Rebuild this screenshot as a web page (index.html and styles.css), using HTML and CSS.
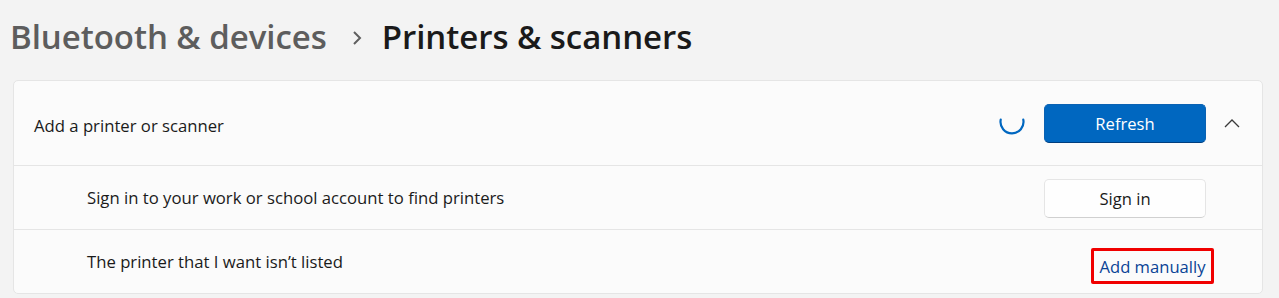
FILE: index.html
```html
<!DOCTYPE html>
<html lang="en">
<head>
<meta charset="utf-8">
<title>Printers &amp; scanners</title>
<link rel="stylesheet" href="styles.css">
</head>
<body>
<header class="breadcrumb">
  <span class="crumb-parent">Bluetooth &amp; devices</span>
  <svg class="crumb-sep" width="10" height="16" viewBox="0 0 10 16"><path d="M2 2 L8 8 L2 14" fill="none" stroke="#5f5f5f" stroke-width="2"/></svg>
  <span class="crumb-current">Printers &amp; scanners</span>
</header>
<section class="card">
  <div class="row row-head">
    <span class="label label-head">Add a printer or scanner</span>
    <div class="actions">
      <svg class="spinner" width="26" height="26" viewBox="0 0 26 26"><path d="M1.7 10.7 A11.5 11.5 0 1 0 24.3 10.7" fill="none" stroke="#0067c0" stroke-width="2.2" stroke-linecap="round"/></svg>
      <button class="btn btn-primary">Refresh</button>
      <span class="expander"><svg width="16" height="9" viewBox="0 0 16 9"><path d="M1 8 L8 1 L15 8" fill="none" stroke="#3a3a3a" stroke-width="1.3"/></svg></span>
    </div>
  </div>
  <div class="row row-sub">
    <span class="label">Sign in to your work or school account to find printers</span>
    <button class="btn btn-secondary">Sign in</button>
  </div>
  <div class="row row-sub row-last">
    <span class="label">The printer that I want isn’t listed</span>
    <span class="highlight"><a class="link" href="#">Add manually</a></span>
  </div>
</section>
</body>
</html>
```
FILE: styles.css
```css
* { box-sizing: border-box; }
body {
  margin: 0;
  background: #f3f3f3;
  font-family: "Open Sans", "Noto Sans", sans-serif;
  color: #1a1a1a;
}
.breadcrumb {
  height: 80px;
  display: flex;
  align-items: center;
  padding: 0 0 8px 10px;
  font-size: 33px;
  font-weight: 600;
  letter-spacing: -0.05px;
}
.crumb-parent { color: #5d5d5d; }
.crumb-sep { margin: 4px 20px 0 25px; }
.crumb-current { color: #1a1a1a; }
.card {
  margin: 0 16px 0 13px;
  background: #fbfbfb;
  border: 1px solid #e5e5e5;
  border-radius: 5px;
}
.row {
  display: flex;
  align-items: center;
  justify-content: space-between;
  font-size: 16.7px;
}
.label-head { margin-top: 4px; }
.row-head {
  height: 84px;
  padding: 0 14px 0 20px;
}
.row-sub {
  height: 64px;
  border-top: 1px solid #e5e5e5;
  padding: 0 56px 0 73px;
}
.row-last { padding-right: 48px; }
.actions {
  display: flex;
  align-items: center;
}
.spinner { margin-right: 19px; margin-top: -2px; }
.btn {
  font-family: inherit;
  font-size: 16.6px;
  width: 162px;
  height: 39px;
  border-radius: 5px;
  cursor: pointer;
}
.btn-primary {
  background: #0067c0;
  color: #fff;
  border: 1px solid #0a62b3;
  border-bottom-color: #003e7e;
}
.btn-secondary {
  background: #fefefe;
  color: #1a1a1a;
  border: 1px solid #e5e5e5;
  border-bottom-color: #d0d0d0;
  margin-top: 1px;
}
.expander {
  width: 32px;
  margin-left: 10px;
  display: flex;
  justify-content: center;
}
.highlight {
  border: 3px solid #f00000;
  border-radius: 2px;
  width: 123px;
  height: 36px;
  display: flex;
  align-items: center;
  justify-content: center;
  margin-top: 9px;
}
.link {
  color: #0a4396;
  text-decoration: none;
  font-size: 16.6px;
}
```
